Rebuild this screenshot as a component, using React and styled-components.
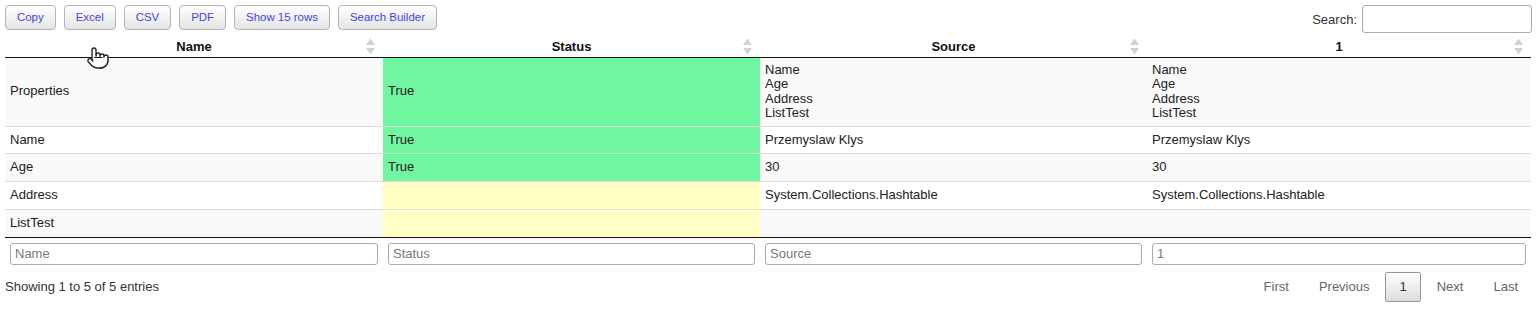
import React from "react";
import styled, { createGlobalStyle } from "styled-components";
import { Pointer } from "lucide-react";

const GlobalStyle = createGlobalStyle`
  html, body {
    margin: 0;
    padding: 0;
    background: #fff;
    font-family: "Liberation Sans", Arial, sans-serif;
    font-size: 13px;
    color: #222;
  }
`;

const Page = styled.div`
  position: relative;
  padding: 5px 4px 0 5px;
`;

const Toolbar = styled.div`
  display: flex;
  justify-content: space-between;
  align-items: flex-start;
  height: 28px;
`;

const ButtonGroup = styled.div`
  display: flex;
  gap: 8px;
`;

const ToolButton = styled.button`
  font-family: "Liberation Sans", Arial, sans-serif;
  font-size: 11.45px;
  line-height: 13px;
  color: #4343e6;
  padding: 5px 11px;
  border: 1px solid #b4b4b4;
  border-radius: 4px;
  background: linear-gradient(to bottom, #ffffff 0%, #e4e4e4 100%);
  cursor: pointer;
`;

const SearchLabel = styled.label`
  display: flex;
  align-items: center;
  gap: 5px;
  color: #333;
  font-size: 13px;
`;

const SearchInput = styled.input`
  width: 170px;
  height: 28px;
  box-sizing: border-box;
  border: 1px solid #aaa;
  border-radius: 3px;
  padding: 5px;
  background: #fff;
`;

const Table = styled.table`
  width: 1526px;
  margin-top: 2px;
  border-collapse: collapse;
  table-layout: fixed;
`;

const HeadCell = styled.th`
  position: relative;
  padding: 4px 18px 3px 18px;
  font-weight: bold;
  font-size: 13px;
  line-height: 15px;
  color: #111;
  text-align: center;
  border-bottom: 1px solid #111;
`;

const SortIcon = styled.svg`
  position: absolute;
  right: 8px;
  top: 3px;
`;

const Row = styled.tr`
  background: ${(p) => (p.$odd ? "#f9f9f9" : "#ffffff")};
  & > td {
    border-top: 1px solid #ddd;
  }
  &:first-child > td {
    border-top: none;
  }
`;

const Cell = styled.td`
  padding: 5px 5px;
  line-height: 16.75px;
  vertical-align: middle;
  background: ${(p) =>
    p.$state === "ok" ? "#70f5a0" : p.$state === "missing" ? "#ffffc6" : "transparent"};
`;

const Lines = styled.div`
  line-height: 14.4px;
`;

const FootCell = styled.th`
  padding: 5px 5px 4px 5px;
  border-top: 1px solid #111;
  font-weight: normal;
`;

const FilterInput = styled.input`
  width: 100%;
  height: 22px;
  box-sizing: border-box;
  border: 1px solid #aaa;
  border-radius: 3px;
  padding: 1px 4px;
  font-family: "Liberation Sans", Arial, sans-serif;
  font-size: 13px;
  color: #333;
  &::placeholder {
    color: #7a7a7a;
  }
`;

const BottomBar = styled.div`
  display: flex;
  justify-content: space-between;
  align-items: center;
  margin-top: 3px;
`;

const Info = styled.div`
  color: #333;
  font-size: 13px;
`;

const Pager = styled.div`
  display: flex;
`;

const PageButton = styled.a`
  margin-left: 2px;
  padding: 6.5px 13px;
  line-height: 15px;
  min-width: 7px;
  text-align: center;
  border-radius: 2px;
  border: 1px solid ${(p) => (p.$current ? "#979797" : "transparent")};
  background: ${(p) =>
    p.$current ? "linear-gradient(to bottom, #ffffff 0%, #dcdcdc 100%)" : "transparent"};
  color: ${(p) => (p.$current ? "#333" : "#666")};
  cursor: default;
`;

const Cursor = styled.div`
  position: absolute;
  left: 86px;
  top: 46px;
  line-height: 0;
`;

const columns = ["Name", "Status", "Source", "1"];
const widths = [378, 377, 387, 384];

const rows = [
  { name: "Properties", state: "ok", status: "True", source: ["Name", "Age", "Address", "ListTest"], target: ["Name", "Age", "Address", "ListTest"] },
  { name: "Name", state: "ok", status: "True", source: "Przemyslaw Klys", target: "Przemyslaw Klys" },
  { name: "Age", state: "ok", status: "True", source: "30", target: "30" },
  { name: "Address", state: "missing", status: "", source: "System.Collections.Hashtable", target: "System.Collections.Hashtable" },
  { name: "ListTest", state: "missing", status: "", source: "", target: "" },
];

const Sort = () => (
  <SortIcon width="9" height="17" viewBox="0 0 9 17">
    <polygon points="0,7 4.5,0.5 9,7" fill="#d2d2d2" />
    <polygon points="0,10 4.5,16.5 9,10" fill="#d2d2d2" />
  </SortIcon>
);

const Value = ({ v }) =>
  Array.isArray(v) ? (
    <Lines>
      {v.map((l) => (
        <div key={l}>{l}</div>
      ))}
    </Lines>
  ) : (
    v
  );

export default function App() {
  return (
    <Page>
      <GlobalStyle />
      <Toolbar>
        <ButtonGroup>
          {["Copy", "Excel", "CSV", "PDF", "Show 15 rows", "Search Builder"].map((b) => (
            <ToolButton key={b}>{b}</ToolButton>
          ))}
        </ButtonGroup>
        <SearchLabel>
          Search:
          <SearchInput type="search" />
        </SearchLabel>
      </Toolbar>

      <Table>
        <colgroup>
          {widths.map((w, i) => (
            <col key={i} style={{ width: w }} />
          ))}
        </colgroup>
        <thead>
          <tr>
            {columns.map((c) => (
              <HeadCell key={c}>
                {c}
                <Sort />
              </HeadCell>
            ))}
          </tr>
        </thead>
        <tbody>
          {rows.map((r, i) => (
            <Row key={r.name} $odd={i % 2 === 0}>
              <Cell>{r.name}</Cell>
              <Cell $state={r.state}>{r.status}</Cell>
              <Cell>
                <Value v={r.source} />
              </Cell>
              <Cell>
                <Value v={r.target} />
              </Cell>
            </Row>
          ))}
        </tbody>
        <tfoot>
          <tr>
            {columns.map((c) => (
              <FootCell key={c}>
                <FilterInput placeholder={c} />
              </FootCell>
            ))}
          </tr>
        </tfoot>
      </Table>

      <BottomBar>
        <Info>Showing 1 to 5 of 5 entries</Info>
        <Pager>
          <PageButton>First</PageButton>
          <PageButton>Previous</PageButton>
          <PageButton $current>1</PageButton>
          <PageButton>Next</PageButton>
          <PageButton>Last</PageButton>
        </Pager>
      </BottomBar>

      <Cursor>
        <Pointer size={24} strokeWidth={1.4} color="#222" fill="#fff" />
      </Cursor>
    </Page>
  );
}
